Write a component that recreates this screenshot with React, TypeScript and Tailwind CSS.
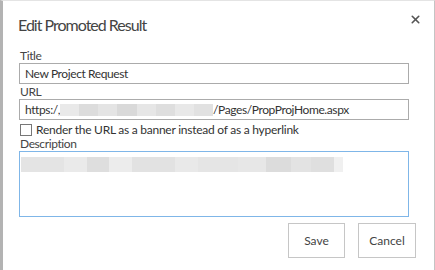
import { X } from 'lucide-react';

const urlBlur = ['#e9e9e9', '#dcdcdc', '#e4e4e4', '#d9d9d9', '#e6e6e6', '#dedede', '#e8e8e8', '#e1e1e1'];
const descBlur = [
  { w: 43, c: '#e4e4e4' },
  { w: 23, c: '#eaeaea' },
  { w: 22, c: '#dedede' },
  { w: 23, c: '#ececec' },
  { w: 43, c: '#e2e2e2' },
  { w: 23, c: '#e9e9e9' },
  { w: 40, c: '#e5e5e5' },
  { w: 28, c: '#e7e7e7' },
  { w: 25, c: '#dcdcdc' },
  { w: 20, c: '#e3e3e3' },
  { w: 23, c: '#dfdfdf' },
  { w: 9, c: '#f0f0f0' },
];

export default function App() {
  return (
    <div
      className="w-[435px] h-[270px] bg-white border-l-[3px] border-l-[#b3b3b3] border-r border-r-[#c4c4c4] border-t border-t-[#e4e4e4] flex flex-col text-[#444] overflow-hidden"
      style={{ fontFamily: 'Lato, "Open Sans", sans-serif' }}
    >
      {/* Header */}
      <div className="flex items-start justify-between pl-[15px] pr-[12px] pt-[12px]">
        <h1 className="text-[16px] leading-[24px] font-normal tracking-[-1px] text-[#444]">
          Edit Promoted Result
        </h1>
        <button className="text-[#555]">
          <X className="w-[13px] h-[13px]" strokeWidth={3} />
        </button>
      </div>

      {/* Form */}
      <div className="flex flex-col pl-[16px] pr-[25px] mt-[12px] text-[12px] tracking-[-0.4px]">
        <label className="leading-[14px] pl-[1px]">Title</label>
        <div className="h-[21px] border border-[#ababab] flex items-center px-[5px] text-[#333]">
          New Project Request
        </div>

        <label className="leading-[14px] mt-[1px] pl-[1px]">URL</label>
        <div className="h-[21px] border border-[#ababab] flex items-center px-[5px] text-[#333] whitespace-nowrap">
          https:/,
          <span className="inline-flex h-[12px] w-[153px]">
            {urlBlur.map((c, i) => (
              <span key={i} className="flex-1 h-full" style={{ background: c }} />
            ))}
          </span>
          /Pages/PropProjHome.aspx
        </div>

        <div className="flex items-center gap-[4px] mt-[3px] pl-[1px]">
          <span className="w-[12px] h-[12px] border border-[#777] bg-white" />
          <span className="text-[12px] leading-[14px] tracking-[-0.25px] text-[#333]">
            Render the URL as a banner instead of as a hyperlink
          </span>
        </div>

        <label className="leading-[14px] pl-[1px]">Description</label>
        <div className="h-[66px] border border-[#7fb6e8] pt-[5px] px-[1px]">
          <div className="flex h-[15px]">
            {descBlur.map((b, i) => (
              <span key={i} className="h-full" style={{ width: b.w, background: b.c }} />
            ))}
          </div>
        </div>
      </div>

      {/* Buttons */}
      <div className="flex justify-end gap-[13px] pr-[18px] mt-[6px]">
        <button className="w-[57px] h-[35px] border border-[#c6c6c6] bg-white text-[12px] text-[#444]">
          Save
        </button>
        <button className="w-[58px] h-[35px] border border-[#c6c6c6] bg-white text-[12px] text-[#444]">
          Cancel
        </button>
      </div>
    </div>
  );
}
